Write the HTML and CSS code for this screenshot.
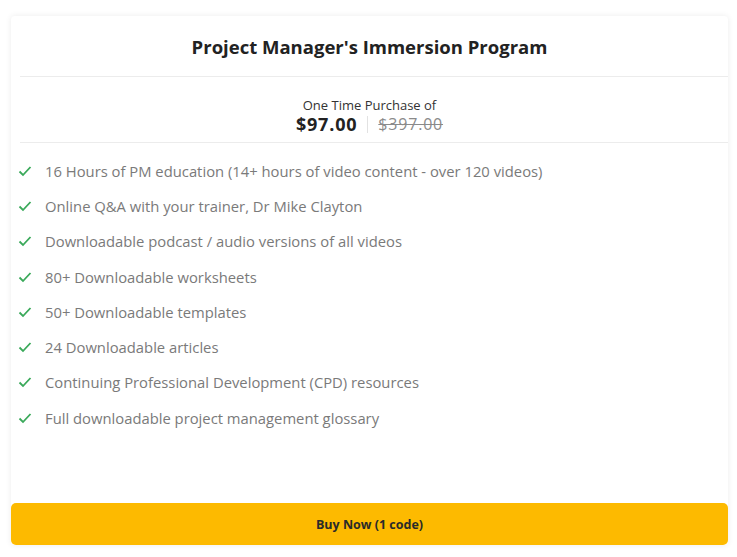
FILE: index.html
```html
<!DOCTYPE html>
<html>
<head>
<meta charset="utf-8">
<link rel="stylesheet" href="styles.css">
</head>
<body>
<div class="card">
  <h1 class="title">Project Manager's Immersion Program</h1>
  <div class="price-block">
    <div class="price-label">One Time Purchase of</div>
    <div class="prices">
      <span class="price">$97.00</span>
      <span class="sep"></span>
      <span class="old">$397.00</span>
    </div>
  </div>
  <ul class="features">
    <li><svg class="check" viewBox="0 0 14 12"><path d="M1.5 6.5 L5 10 L12.5 2"/></svg><span>16 Hours of PM education (14+ hours of video content - over 120 videos)</span></li>
    <li><svg class="check" viewBox="0 0 14 12"><path d="M1.5 6.5 L5 10 L12.5 2"/></svg><span>Online Q&amp;A with your trainer, Dr Mike Clayton</span></li>
    <li><svg class="check" viewBox="0 0 14 12"><path d="M1.5 6.5 L5 10 L12.5 2"/></svg><span>Downloadable podcast / audio versions of all videos</span></li>
    <li><svg class="check" viewBox="0 0 14 12"><path d="M1.5 6.5 L5 10 L12.5 2"/></svg><span>80+ Downloadable worksheets</span></li>
    <li><svg class="check" viewBox="0 0 14 12"><path d="M1.5 6.5 L5 10 L12.5 2"/></svg><span>50+ Downloadable templates</span></li>
    <li><svg class="check" viewBox="0 0 14 12"><path d="M1.5 6.5 L5 10 L12.5 2"/></svg><span>24 Downloadable articles</span></li>
    <li><svg class="check" viewBox="0 0 14 12"><path d="M1.5 6.5 L5 10 L12.5 2"/></svg><span>Continuing Professional Development (CPD) resources</span></li>
    <li><svg class="check" viewBox="0 0 14 12"><path d="M1.5 6.5 L5 10 L12.5 2"/></svg><span>Full downloadable project management glossary</span></li>
  </ul>
  <button class="buy">Buy Now (1 code)</button>
</div>
</body>
</html>
```
FILE: styles.css
```css
* { box-sizing: border-box; }
html, body { margin: 0; padding: 0; background: #fff; }
body {
  font-family: "Open Sans", "Lato", sans-serif;
  padding: 16px 9px 12px 11px;
}
.card {
  width: 717px;
  height: 529px;
  background: #fff;
  box-shadow: 0 0 6px rgba(0,0,0,0.08);
  border-radius: 4px;
  display: flex;
  flex-direction: column;
}
.title {
  margin: 0 0 0 9px;
  height: 61px;
  border-bottom: 1px solid #ececec;
  font-size: 18.5px;
  font-weight: 700;
  color: #222;
  text-align: center;
  line-height: 62px;
  padding-right: 9px;
}
.price-block {
  margin-left: 9px;
  height: 66px;
  border-bottom: 1px solid #ececec;
  text-align: center;
  padding-top: 20px;
  padding-right: 9px;
}
.price-label {
  font-size: 13px;
  color: #333;
  line-height: 16px;
}
.prices {
  display: flex;
  justify-content: center;
  align-items: center;
  gap: 10px;
  line-height: 22px;
  margin-top: 0;
}
.price { font-size: 18px; font-weight: 700; color: #222; letter-spacing: 0.8px; }
.sep { width: 1px; height: 17px; background: #e2e2e2; }
.old { font-size: 16px; color: #8a8a8a; text-decoration: line-through; letter-spacing: 0.8px; }
.features {
  list-style: none;
  margin: 0;
  padding: 10px 0 0 7px;
  flex: 1;
}
.features li {
  display: flex;
  align-items: center;
  height: 35.3px;
  font-size: 14.8px;
  color: #7a7a7a;
}
.check {
  width: 14px;
  height: 12px;
  margin-right: 13px;
  fill: none;
  stroke: #3aa95a;
  stroke-width: 1.8;
}
.buy {
  height: 42px;
  width: 100%;
  border: none;
  border-radius: 5px;
  background: #fdba00;
  color: #2a2a2a;
  font-family: inherit;
  font-size: 12.5px;
  font-weight: 700;
  margin-bottom: 0;
}
```
